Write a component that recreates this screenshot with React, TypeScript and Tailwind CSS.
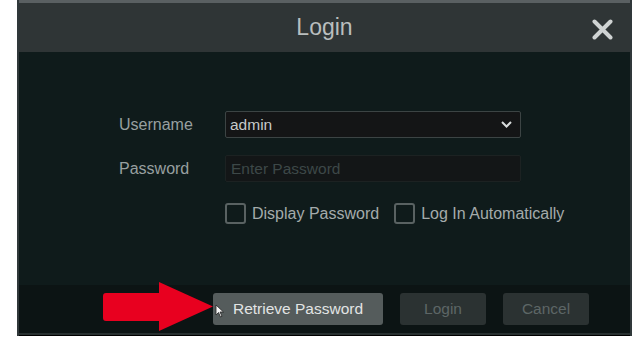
const FONT = "font-['Liberation_Sans','Arial',sans-serif]";

function CheckBox({ label }: { label: string }) {
  return (
    <label className="flex items-center gap-[6px]">
      <span className="block w-[21px] h-[21px] rounded-[3px] border-2 border-[#596262]" />
      <span className="text-[16px] text-[#a4abab] leading-none">{label}</span>
    </label>
  );
}

function RedArrow() {
  return (
    <svg className="absolute left-[103px] top-[282px]" width="112" height="50" viewBox="0 0 112 50">
      <path d="M3 11 H56 V0 L110 24.5 L56 49 V39 H3 Q0 39 0 36 V14 Q0 11 3 11 Z" fill="#e8001f" />
    </svg>
  );
}

function Cursor() {
  return (
    <svg className="absolute left-[215px] top-[304px]" width="10" height="14" viewBox="0 0 10 14">
      <path d="M1 1 L1 11 L3.5 8.5 L5.5 13 L7 12.3 L5 8 L8.5 8 Z" fill="#f2f2f2" stroke="#222" strokeWidth="0.8" />
    </svg>
  );
}

export default function App() {
  return (
    <div className={`relative w-[634px] h-[340px] bg-white overflow-hidden ${FONT}`}>
      <div className="ml-[17px] w-[615px] h-[336px] flex flex-col bg-[#0f1b1b] border-l-2 border-r-2 border-[#30383a]">
        {/* top strip */}
        <div className="h-[3px] bg-[#5a6062]" />

        {/* title bar */}
        <div className="relative h-[49px] bg-[#2f3536] flex items-center justify-center">
          <span className="text-[23px] text-[#b9bebe] leading-none">Login</span>
          <svg className="absolute right-[17px] top-[16px]" width="21" height="21" viewBox="0 0 21 21">
            <path d="M2.5 2.5 L18.5 18.5 M18.5 2.5 L2.5 18.5" stroke="#cfd3d3" strokeWidth="4" strokeLinecap="round" />
          </svg>
        </div>

        {/* body */}
        <div className="flex-1 pt-[59px] pl-[100px]">
          <div className="flex items-center h-[27px]">
            <span className="w-[106px] text-[16px] text-[#98a0a0]">Username</span>
            <div className="w-[296px] h-[27px] bg-[#141516] border border-[#3c4444] rounded-[2px] flex items-center justify-between pl-[4px] pr-[8px]">
              <span className="text-[15.5px] text-[#c6caca]">admin</span>
              <svg width="11" height="7" viewBox="0 0 11 7">
                <path d="M1 1 L5.5 5.5 L10 1" fill="none" stroke="#d8dcdc" strokeWidth="2" />
              </svg>
            </div>
          </div>

          <div className="flex items-center h-[27px] mt-[17px]">
            <span className="w-[106px] text-[16px] text-[#98a0a0]">Password</span>
            <div className="w-[296px] h-[27px] bg-[#131617] border border-[#1c2222] rounded-[2px] flex items-center pl-[5px]">
              <span className="text-[15.5px] text-[#3d4848]">Enter Password</span>
            </div>
          </div>

          <div className="flex items-center gap-[15px] mt-[21px] ml-[106px]">
            <CheckBox label="Display Password" />
            <CheckBox label="Log In Automatically" />
          </div>
        </div>

        {/* footer */}
        <div className="h-[50px] bg-[#0c1414] border-b-2 border-[#283030] pt-[8px] pl-[194px] flex gap-[17px]">
          <button className="w-[170px] h-[32px] rounded-[3px] bg-[#555c5c] text-[15.5px] text-[#e2e4e4]">
            Retrieve Password
          </button>
          <button className="w-[86px] h-[32px] rounded-[3px] bg-[#2b3232] text-[15.5px] text-[#5d6666]">
            Login
          </button>
          <button className="w-[86px] h-[32px] rounded-[3px] bg-[#2b3232] text-[15.5px] text-[#5d6666]">
            Cancel
          </button>
        </div>
        <div className="h-[1px] bg-black" />
      </div>

      <RedArrow />
      <Cursor />
    </div>
  );
}
